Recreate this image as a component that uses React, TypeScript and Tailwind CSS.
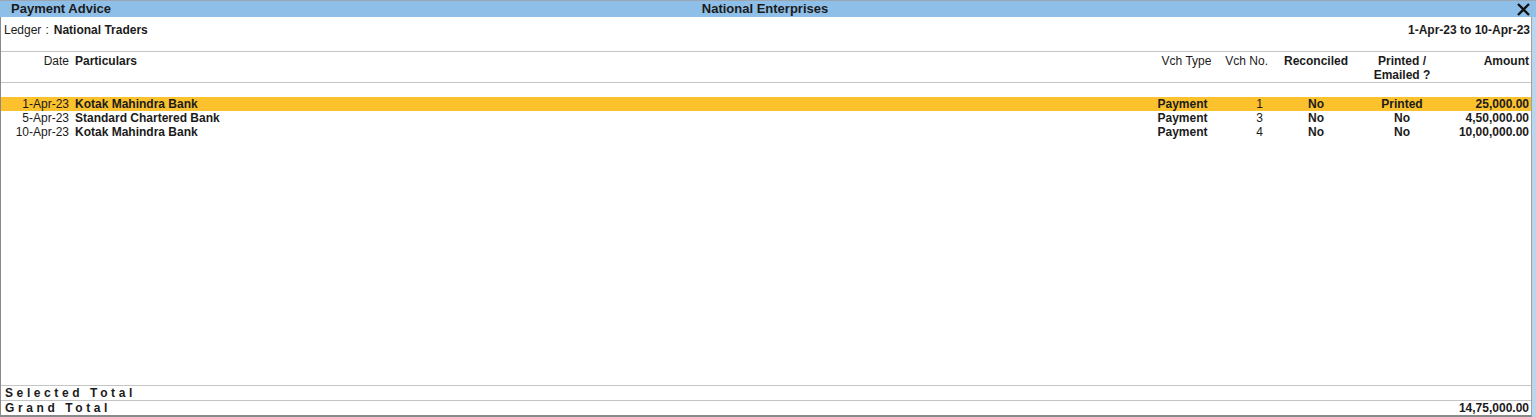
import { Fragment } from 'react';

interface Voucher {
  date: string;
  particulars: string;
  vchType: string;
  vchNo: string;
  reconciled: string;
  printed: string;
  amount: string;
}

const vouchers: Voucher[] = [
  { date: '1-Apr-23', particulars: 'Kotak Mahindra Bank', vchType: 'Payment', vchNo: '1', reconciled: 'No', printed: 'Printed', amount: '25,000.00' },
  { date: '5-Apr-23', particulars: 'Standard Chartered Bank', vchType: 'Payment', vchNo: '3', reconciled: 'No', printed: 'No', amount: '4,50,000.00' },
  { date: '10-Apr-23', particulars: 'Kotak Mahindra Bank', vchType: 'Payment', vchNo: '4', reconciled: 'No', printed: 'No', amount: '10,00,000.00' },
];

const cols = 'grid grid-cols-[69px_1fr_65px_53px_96px_76px_91px]';

export default function App() {
  return (
    <div
      className="flex h-[417px] w-[1536px] flex-col overflow-hidden bg-white text-[12px] leading-[14px] text-[#1b1b1b]"
      style={{ fontFamily: '"Liberation Sans", Arial, sans-serif' }}
    >
      {/* Title bar */}
      <div className="flex h-[17px] shrink-0 items-center border-t border-[#9aa7b3] bg-[#8ebfe8] text-[13px] font-bold">
        <div className="w-[300px] pl-[11px]">Payment Advice</div>
        <div className="flex-1 pr-[6px] text-center">National Enterprises</div>
        <div className="flex w-[300px] justify-end pr-[6px]">
          <svg width="13" height="13" viewBox="0 0 13 13" className="mt-[1px]">
            <path d="M1 1 L12 12 M12 1 L1 12" stroke="#111" strokeWidth="2.3" />
          </svg>
        </div>
      </div>

      {/* Body */}
      <div className="flex min-h-0 flex-1 flex-col border-l border-[#8a8a8a] border-r-[4px] border-r-[#b9d6ef]">
        <div className="flex flex-1 flex-col border-r border-[#a0a0a0]">
          <div className="flex h-[35px] shrink-0 items-start justify-between border-b border-[#c4c4c4] pt-[6px] pl-[3px] pr-[1px]">
            <div>
              <span>Ledger</span>
              <span className="ml-[4px] mr-[5px]">:</span>
              <span className="font-bold">National Traders</span>
            </div>
            <div className="font-bold">1-Apr-23 to 10-Apr-23</div>
          </div>

          {/* Column headers */}
          <div className={`${cols} h-[31px] shrink-0 border-b border-[#c4c4c4] pt-[1px]`}>
            <div className="pt-[1px] pr-[1px] text-right">Date</div>
            <div className="pl-[5px] pt-[1px] font-bold">Particulars</div>
            <div className="pt-[1px] pl-[8px] text-center">Vch Type</div>
            <div className="pt-[1px] text-right">Vch No.</div>
            <div className="pt-[1px] text-center font-bold">Reconciled</div>
            <div className="pt-[1px] text-center font-bold">
              Printed /
              <br />
              Emailed ?
            </div>
            <div className="pt-[1px] pr-[2px] text-right font-bold">Amount</div>
          </div>

          {/* Rows */}
          <div className="flex flex-1 flex-col pt-[14px]">
            {vouchers.map((v, i) => (
              <div key={i} className={`${cols} h-[14px] ${i === 0 ? 'bg-[#fcc22e]' : ''}`}>
                <Fragment>
                  <div className="pr-[1px] text-right">{v.date}</div>
                  <div className="pl-[5px] font-bold">{v.particulars}</div>
                  <div className="text-center font-bold">{v.vchType}</div>
                  <div className="pr-[5px] text-right">{v.vchNo}</div>
                  <div className="text-center font-bold">{v.reconciled}</div>
                  <div className="text-center font-bold">{v.printed}</div>
                  <div className="pr-[2px] text-right font-bold">{v.amount}</div>
                </Fragment>
              </div>
            ))}
          </div>

          {/* Totals */}
          <div className="flex h-[15px] shrink-0 items-center border-t border-[#c4c4c4] pl-[4px] font-bold tracking-[3.6px]">
            Selected Total
          </div>
          <div className="flex h-[15px] shrink-0 items-center justify-between border-t border-[#c4c4c4] pl-[4px] pr-[2px] font-bold">
            <span className="tracking-[3.6px]">Grand Total</span>
            <span>14,75,000.00</span>
          </div>
        </div>
        <div className="h-[2px] shrink-0 bg-[#8a8a8a]" />
      </div>
    </div>
  );
}
